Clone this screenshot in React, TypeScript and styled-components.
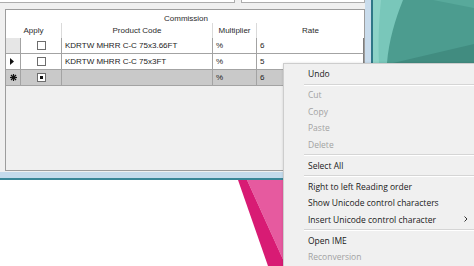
import React from "react";
import styled, { createGlobalStyle } from "styled-components";

const GlobalStyle = createGlobalStyle`
  html, body {
    margin: 0;
    padding: 0;
  }
  body {
    width: 474px;
    height: 266px;
    overflow: hidden;
    background: #ffffff;
  }
`;

const COLUMNS = "15px 41px 151px 44px 107px";

const Screen = styled.div`
  position: relative;
  width: 474px;
  height: 266px;
  overflow: hidden;
  background: #ffffff;
  font-family: "Liberation Sans", Arial, sans-serif;
`;

const Upper = styled.div`
  display: flex;
  height: 180px;
`;

const AppWindow = styled.div`
  width: 373px;
  display: flex;
  flex-direction: column;
`;

const WindowMiddle = styled.div`
  display: flex;
  height: 172px;
`;

const Client = styled.div`
  width: 365px;
  background: #f0f0f0;
  display: flex;
  flex-direction: column;
`;

const SideFrame = styled.div`
  width: 6px;
  background: #c9dcec;
  border-right: 2px solid #2f7787;
`;

const BottomFrame = styled.div`
  height: 6px;
  background: #c4dbec;
  border-bottom: 2px solid #3a8798;
`;

const FieldRow = styled.div`
  display: flex;
  gap: 6px;
  height: 3px;
`;

const Field = styled.div<{ $width: number; $left?: boolean }>`
  width: ${(p) => p.$width}px;
  box-sizing: border-box;
  background: #ffffff;
  border: 1px solid #adadad;
  border-top: none;
  border-left: ${(p) => (p.$left ? "1px solid #adadad" : "none")};
`;

const GridBox = styled.div`
  margin: 6px 0 0 5px;
  width: 360px;
  height: 162px;
  box-sizing: border-box;
  border: 1px solid #9d9d9d;
  background: #f0f0f0;
  display: flex;
  flex-direction: column;
`;

const Header = styled.div`
  display: grid;
  grid-template-columns: ${COLUMNS};
  grid-template-rows: 13px 15px;
  background: #ffffff;
  color: #2b2b2b;
  font-size: 8px;
`;

const GroupTitle = styled.div`
  grid-column: 1 / 6;
  display: flex;
  align-items: flex-end;
  justify-content: center;
  padding-left: 2px;
`;

const HeaderCell = styled.div<{ $span?: number; $divider?: boolean }>`
  grid-column: span ${(p) => p.$span ?? 1};
  display: flex;
  align-items: center;
  justify-content: center;
  box-sizing: border-box;
  border-right: ${(p) => (p.$divider ? "1px solid #dadada" : "none")};
`;

const DataRow = styled.div`
  display: grid;
  grid-template-columns: ${COLUMNS};
  height: 16px;
`;

const Cell = styled.div<{ $bg: string; $center?: boolean; $edge?: boolean }>`
  box-sizing: border-box;
  display: flex;
  align-items: center;
  justify-content: ${(p) => (p.$center ? "center" : "flex-start")};
  padding-left: ${(p) => (p.$center ? 0 : 3)}px;
  background: ${(p) => p.$bg};
  border-bottom: 1px solid #a3a3a3;
  border-right: 1px solid ${(p) => (p.$edge ? "#7e7e7e" : "#a3a3a3")};
  color: #1c1c1c;
  font-size: 8px;
  white-space: nowrap;
  overflow: hidden;
`;

const RowHead = styled(Cell)`
  padding-left: 4px;
`;

const Checkbox = styled.span<{ $checked?: boolean }>`
  width: 9px;
  height: 9px;
  box-sizing: border-box;
  border: 1px solid #6d6d6d;
  background: #ffffff;
  display: flex;
  align-items: center;
  justify-content: center;

  &::after {
    content: "";
    width: 3px;
    height: 3px;
    background: ${(p) => (p.$checked ? "#111111" : "transparent")};
  }
`;

const Wallpaper = styled.div`
  flex: 1;
  display: flex;
`;

const Lower = styled.div`
  height: 86px;
  display: flex;
  background: #ffffff;
`;

const Menu = styled.div`
  position: absolute;
  left: 283px;
  top: 63px;
  width: 200px;
  height: 220px;
  padding-top: 1.5px;
  box-sizing: border-box;
  background: #f0f0f0;
  border: 1px solid #cdcdcd;
  box-shadow: 1px 1px 3px rgba(0, 0, 0, 0.25);
  font-family: "Open Sans", "Noto Sans", sans-serif;
`;

const MenuItem = styled.div<{ $disabled?: boolean }>`
  height: 16.5px;
  display: flex;
  align-items: center;
  padding: 0 14px 0 24px;
  font-size: 8.5px;
  color: ${(p) => (p.$disabled ? "#a2a2a2" : "#1a1a1a")};
  white-space: nowrap;
`;

const SubArrow = styled.span`
  margin-left: auto;
  display: flex;
`;

const Separator = styled.div`
  height: 1px;
  margin: 1.5px 0 1px 20px;
  background: #d5d5d5;
  border-bottom: 1px solid #ffffff;
`;

type Row = {
  marker: "none" | "current" | "new";
  checked: boolean;
  code: string;
  rate: string;
};

const rows: Row[] = [
  { marker: "none", checked: false, code: "KDRTW MHRR C-C 75x3.66FT", rate: "6" },
  { marker: "current", checked: false, code: "KDRTW MHRR C-C 75x3FT", rate: "5" },
  { marker: "new", checked: true, code: "", rate: "6" },
];

const Marker = ({ kind }: { kind: Row["marker"] }) => {
  if (kind === "current") {
    return (
      <svg width="4" height="7" viewBox="0 0 4 7">
        <polygon points="0,0 4,3.5 0,7" fill="#111" />
      </svg>
    );
  }
  if (kind === "new") {
    return (
      <svg width="7" height="7" viewBox="0 0 7 7">
        <g stroke="#111" strokeWidth="1.2">
          <line x1="3.5" y1="0" x2="3.5" y2="7" />
          <line x1="0" y1="3.5" x2="7" y2="3.5" />
          <line x1="1" y1="1" x2="6" y2="6" />
          <line x1="6" y1="1" x2="1" y2="6" />
        </g>
      </svg>
    );
  }
  return null;
};

const rowTone = (r: Row) => {
  if (r.marker === "new") return { head: "#c9c9c9", body: "#c9c9c9" };
  if (r.marker === "current") return { head: "#ffffff", body: "#ffffff" };
  return { head: "#e6e6e6", body: "#ffffff" };
};

const menu: ({ label: string; disabled?: boolean; sub?: boolean } | "sep")[] = [
  { label: "Undo" },
  "sep",
  { label: "Cut", disabled: true },
  { label: "Copy", disabled: true },
  { label: "Paste", disabled: true },
  { label: "Delete", disabled: true },
  "sep",
  { label: "Select All" },
  "sep",
  { label: "Right to left Reading order" },
  { label: "Show Unicode control characters" },
  { label: "Insert Unicode control character", sub: true },
  "sep",
  { label: "Open IME" },
  { label: "Reconversion", disabled: true },
];

const App = () => {
  return (
    <Screen>
      <GlobalStyle />
      <Upper>
        <AppWindow>
          <WindowMiddle>
            <Client>
              <FieldRow>
                <Field $width={235} />
                <Field $width={124} $left />
              </FieldRow>
              <GridBox>
                <Header>
                  <GroupTitle>Commission</GroupTitle>
                  <HeaderCell $span={2} $divider>
                    Apply
                  </HeaderCell>
                  <HeaderCell $divider>Product Code</HeaderCell>
                  <HeaderCell $divider>Multiplier</HeaderCell>
                  <HeaderCell>Rate</HeaderCell>
                </Header>
                {rows.map((r, i) => {
                  const tone = rowTone(r);
                  return (
                    <DataRow key={i}>
                      <RowHead $bg={tone.head}>
                        <Marker kind={r.marker} />
                      </RowHead>
                      <Cell $bg={tone.body} $center>
                        <Checkbox $checked={r.checked} />
                      </Cell>
                      <Cell $bg={tone.body}>{r.code}</Cell>
                      <Cell $bg={tone.body}>%</Cell>
                      <Cell $bg={tone.body} $edge>
                        {r.rate}
                      </Cell>
                    </DataRow>
                  );
                })}
              </GridBox>
            </Client>
            <SideFrame />
          </WindowMiddle>
          <BottomFrame />
        </AppWindow>
        <Wallpaper>
          <svg width="101" height="180" viewBox="0 0 101 180">
            <rect width="101" height="180" fill="#4c9c8f" />
            <path d="M0 0 H30 C22 20 16 40 14 63 V180 H0 Z" fill="#79c7ba" />
            <path d="M0 0 H8 C6 20 5 40 6 63 H0 Z" fill="#8dd3c7" />
            <polygon points="60,0 101,0 101,8" fill="#58a99b" />
            <polygon points="20,63 101,44 101,63" fill="#418c80" />
          </svg>
        </Wallpaper>
      </Upper>
      <Lower>
        <svg width="474" height="86" viewBox="0 0 474 86">
          <polygon points="247,0 300,0 300,86 286,86" fill="#e65a9f" />
          <polygon points="238,0 247,0 286,86 268,86" fill="#d81b74" />
        </svg>
      </Lower>
      <Menu>
        {menu.map((m, i) =>
          m === "sep" ? (
            <Separator key={i} />
          ) : (
            <MenuItem key={i} $disabled={m.disabled}>
              {m.label}
              {m.sub && (
                <SubArrow>
                  <svg width="4" height="6" viewBox="0 0 4 6">
                    <polyline points="0.5,0.5 3,3 0.5,5.5" fill="none" stroke="#333" strokeWidth="1" />
                  </svg>
                </SubArrow>
              )}
            </MenuItem>
          )
        )}
      </Menu>
    </Screen>
  );
};

export default App;
